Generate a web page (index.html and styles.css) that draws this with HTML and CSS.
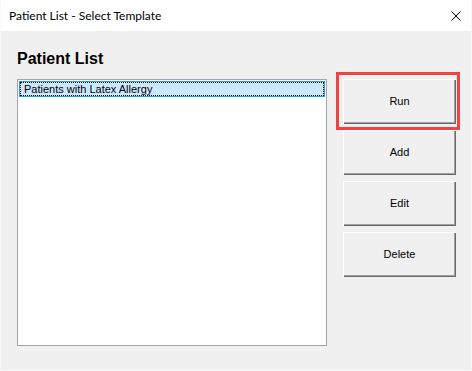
FILE: index.html
```html
<!DOCTYPE html>
<html>
<head>
<meta charset="utf-8">
<link rel="stylesheet" href="styles.css">
</head>
<body>
<div class="window">
  <div class="titlebar">
    <span class="title">Patient List - Select Template</span>
    <svg class="close" width="10" height="10" viewBox="0 0 10 10"><path d="M0.5 0.5 L9.5 9.5 M9.5 0.5 L0.5 9.5" stroke="#000" stroke-width="1" fill="none"/></svg>
  </div>
  <div class="content">
    <h1 class="heading">Patient List</h1>
    <div class="listbox">
      <div class="item"><span class="item-text">Patients with Latex Allergy</span></div>
    </div>
    <div class="buttons">
      <button class="btn btn-run">Run</button>
      <button class="btn">Add</button>
      <button class="btn">Edit</button>
      <button class="btn">Delete</button>
    </div>
  </div>
</div>
</body>
</html>
```
FILE: styles.css
```css
* { box-sizing: border-box; }
html, body { margin: 0; padding: 0; }
body { width: 472px; height: 371px; overflow: hidden; background: #f0f0f0; }
.window {
  width: 472px;
  height: 371px;
  background: #f0f0f0;
  border-left: 1px solid #f8f8f8;
  border-right: 1px solid #f8f8f8;
  border-bottom: 1px solid #f8f8f8;
  display: flex;
  flex-direction: column;
}
.titlebar {
  height: 31px;
  background: #ffffff;
  display: flex;
  align-items: center;
  justify-content: space-between;
  padding: 0 10px 0 8px;
  flex: none;
}
.title {
  font-family: Lato, "Liberation Sans", sans-serif;
  font-size: 12px;
  line-height: 31px;
  color: #000;
}
.close { display: block; }
.content {
  display: grid;
  grid-template-columns: 310px 113px;
  grid-template-rows: 18px 267px;
  column-gap: 16px;
  row-gap: 11px;
  padding: 19px 0 0 16px;
}
.heading {
  margin: 0;
  grid-column: 1;
  grid-row: 1;
  font-family: "Liberation Sans", Arial, sans-serif;
  font-weight: bold;
  font-size: 16px;
  line-height: 18px;
  color: #000;
}
.listbox {
  grid-column: 1;
  grid-row: 2;
  background: #fff;
  border: 1px solid #a4a4a4;
  padding: 1px;
}
.item {
  height: 16px;
  border: 1px solid #26a0da;
  background: #cce8ff;
  padding: 0;
}
.item-text {
  display: block;
  height: 14px;
  border: 1px dotted #000;
  padding-left: 3px;
  font-family: "Liberation Sans", Arial, sans-serif;
  font-size: 11px;
  line-height: 12px;
  color: #000;
}
.buttons {
  grid-column: 2;
  grid-row: 2;
  display: flex;
  flex-direction: column;
  gap: 6px;
}
.btn {
  position: relative;
  width: 113px;
  height: 45px;
  margin: 0;
  padding: 0 0 1px 0;
  border: none;
  background: #f0f0f0;
  box-shadow: inset 1px 1px #ffffff, inset -1px -1px #696969, inset -2px -2px #a0a0a0;
  font-family: "Liberation Sans", Arial, sans-serif;
  font-size: 11px;
  color: #000;
}
.btn-run::after {
  content: "";
  position: absolute;
  left: -7px;
  top: -7px;
  right: -4px;
  bottom: -6px;
  border: 3px solid #f04444;
  pointer-events: none;
}
```
